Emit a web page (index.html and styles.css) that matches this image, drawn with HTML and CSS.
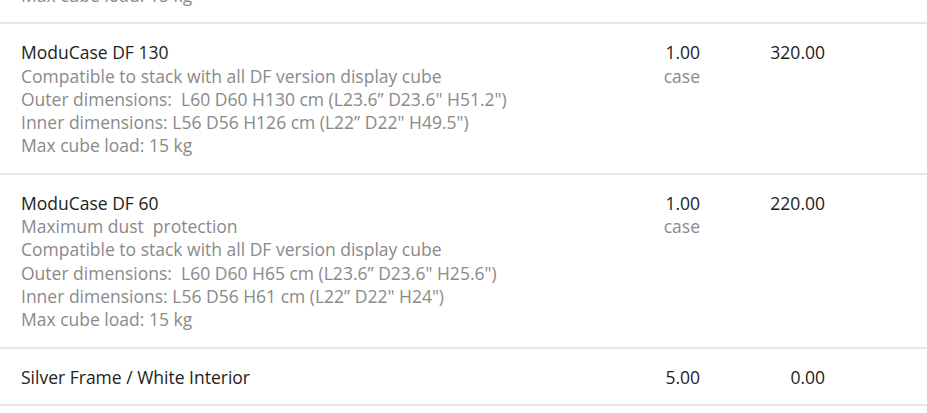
FILE: index.html
```html
<!DOCTYPE html>
<html>
<head>
<meta charset="utf-8">
<link rel="stylesheet" href="styles.css">
</head>
<body>
<div class="list">
  <div class="row">
    <div class="desc">
      <div class="sub">Max cube load: 15 kg</div>
    </div>
    <div class="qty"></div>
    <div class="price"></div>
  </div>
  <div class="row">
    <div class="desc">
      <div class="title">ModuCase DF 130</div>
      <div class="sub">Compatible to stack with all DF version display cube</div>
      <div class="sub">Outer dimensions:&nbsp; L60 D60 H130 cm (L23.6” D23.6" H51.2")</div>
      <div class="sub">Inner dimensions: L56 D56 H126 cm (L22” D22" H49.5")</div>
      <div class="sub">Max cube load: 15 kg</div>
    </div>
    <div class="qty">1.00<div class="unit">case</div></div>
    <div class="price">320.00</div>
  </div>
  <div class="row">
    <div class="desc">
      <div class="title">ModuCase DF 60</div>
      <div class="sub">Maximum dust&nbsp; protection</div>
      <div class="sub">Compatible to stack with all DF version display cube</div>
      <div class="sub">Outer dimensions:&nbsp; L60 D60 H65 cm (L23.6” D23.6" H25.6")</div>
      <div class="sub">Inner dimensions: L56 D56 H61 cm (L22” D22" H24")</div>
      <div class="sub">Max cube load: 15 kg</div>
    </div>
    <div class="qty">1.00<div class="unit">case</div></div>
    <div class="price">220.00</div>
  </div>
  <div class="row">
    <div class="desc">
      <div class="title">Silver Frame / White Interior</div>
    </div>
    <div class="qty">5.00</div>
    <div class="price">0.00</div>
  </div>
</div>
</body>
</html>
```
FILE: styles.css
```css
html, body {
  margin: 0;
  padding: 0;
  background: #ffffff;
}
body {
  font-family: "Open Sans", sans-serif;
  font-size: 17.5px;
  line-height: 23.3px;
  color: #222222;
  overflow: hidden;
}
.list {
  margin-top: -33px;
}
.row {
  display: grid;
  grid-template-columns: 1fr 80px 125px 102px;
  padding: 17px 0 15px 21px;
  border-bottom: 2px solid #e6e6e6;
}
.title {
  color: #222222;
}
.sub {
  color: #8a8a8a;
}
.qty, .price {
  text-align: right;
}
.unit {
  color: #8a8a8a;
}
```
